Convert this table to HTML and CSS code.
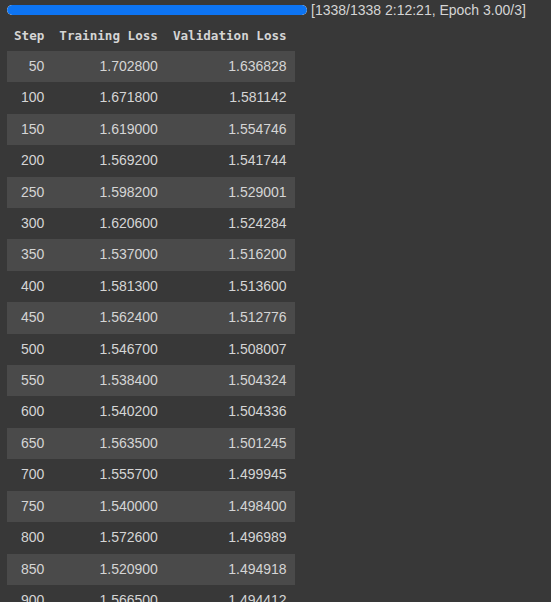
FILE: index.html
```html
<!DOCTYPE html>
<html>
<head>
<meta charset="utf-8">
<link rel="stylesheet" href="styles.css">
</head>
<body>
<div class="progress-row">
  <div class="bar"><div class="fill"></div></div>
  <span class="status">[1338/1338 2:12:21, Epoch 3.00/3]</span>
</div>
<table class="log">
  <thead>
    <tr><th>Step</th><th>Training Loss</th><th>Validation Loss</th></tr>
  </thead>
  <tbody>
    <tr><td>50</td><td>1.702800</td><td>1.636828</td></tr>
    <tr><td>100</td><td>1.671800</td><td>1.581142</td></tr>
    <tr><td>150</td><td>1.619000</td><td>1.554746</td></tr>
    <tr><td>200</td><td>1.569200</td><td>1.541744</td></tr>
    <tr><td>250</td><td>1.598200</td><td>1.529001</td></tr>
    <tr><td>300</td><td>1.620600</td><td>1.524284</td></tr>
    <tr><td>350</td><td>1.537000</td><td>1.516200</td></tr>
    <tr><td>400</td><td>1.581300</td><td>1.513600</td></tr>
    <tr><td>450</td><td>1.562400</td><td>1.512776</td></tr>
    <tr><td>500</td><td>1.546700</td><td>1.508007</td></tr>
    <tr><td>550</td><td>1.538400</td><td>1.504324</td></tr>
    <tr><td>600</td><td>1.540200</td><td>1.504336</td></tr>
    <tr><td>650</td><td>1.563500</td><td>1.501245</td></tr>
    <tr><td>700</td><td>1.555700</td><td>1.499945</td></tr>
    <tr><td>750</td><td>1.540000</td><td>1.498400</td></tr>
    <tr><td>800</td><td>1.572600</td><td>1.496989</td></tr>
    <tr><td>850</td><td>1.520900</td><td>1.494918</td></tr>
    <tr><td>900</td><td>1.566500</td><td>1.494412</td></tr>
  </tbody>
</table>
</body>
</html>
```
FILE: styles.css
```css
html, body {
  margin: 0;
  padding: 0;
  background: #383838;
  color: #d5d5d5;
  font-family: "Liberation Sans", Arial, sans-serif;
  font-size: 14px;
}
.progress-row {
  display: flex;
  align-items: center;
  gap: 4px;
  padding: 2px 0 0 7px;
  height: 16px;
}
.bar {
  width: 300px;
  height: 10.5px;
  border-radius: 5.5px;
  background: #ececec;
  overflow: hidden;
}
.fill {
  width: 100%;
  height: 100%;
  background: #0d74f2;
  border-radius: 5.5px;
}
.status {
  line-height: 16px;
  white-space: nowrap;
}
.log {
  border-collapse: collapse;
  border-spacing: 0;
  margin: 2px 0 0 7px;
}
.log th {
  font-family: "DejaVu Sans Mono", monospace;
  font-weight: bold;
  font-size: 12.6px;
  text-align: right;
  line-height: 31px;
  padding: 0 8px 0 7px;
  color: #d5d5d5;
}
.log td {
  text-align: right;
  line-height: 31.4px;
  padding: 0 8px 0 7px;
}
.log tbody tr:nth-child(odd) {
  background: #4a4a4a;
}
```
